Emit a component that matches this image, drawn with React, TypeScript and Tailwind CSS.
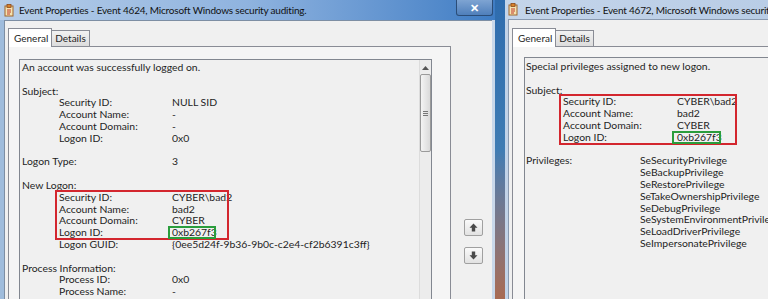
import React from "react";

const FONT = { fontFamily: 'Lato, "Open Sans", sans-serif' };

type Row = { label?: string; value?: string; indent?: boolean; blank?: boolean };

function TitleIcon() {
  return (
    <svg width="11" height="13" viewBox="0 0 11 13" className="shrink-0">
      <rect x="1" y="2" width="8" height="10" fill="#f4e3b0" stroke="#a0642a" strokeWidth="1" />
      <rect x="3" y="0.5" width="4" height="3" fill="#d9822b" stroke="#8a4a1a" strokeWidth="0.8" />
      <path d="M3 6h4M3 8h4M3 10h3" stroke="#c0392b" strokeWidth="1" />
    </svg>
  );
}

function Tabs() {
  return (
    <div className="flex items-end h-[19px]">
      <div className="h-[19px] pl-[5px] pr-[3px] pt-[1px] border border-b-0 border-[#898c95] bg-white text-[10px] text-[#1e1e1e] leading-[16px] relative z-10 -mb-px whitespace-nowrap">
        General
      </div>
      <div className="h-[16px] px-[3px] border border-l-0 border-b-0 border-[#898c95] bg-gradient-to-b from-[#f2f2f2] to-[#dcdcdc] text-[10px] text-[#1e1e1e] leading-[15px] whitespace-nowrap">
        Details
      </div>
    </div>
  );
}

function Lines({
  rows,
  labelW,
  topW,
  red,
  green,
}: {
  rows: Row[];
  labelW: number;
  topW: number;
  red: { start: number; count: number; w: number };
  green: { left: number; w: number };
}) {
  const renderRow = (r: Row, i: number) => {
    if (r.blank) return <div key={i} className="h-[11.8px]" />;
    if (!r.indent && !r.value)
      return (
        <div key={i} className="h-[11.8px] whitespace-nowrap">
          {r.label}
        </div>
      );
    return (
      <div key={i} className={`h-[11.8px] flex whitespace-nowrap ${r.indent ? "pl-[37px]" : ""}`}>
        <div className="shrink-0" style={{ width: r.indent ? labelW : topW }}>
          {r.label}
        </div>
        <div>{r.value}</div>
      </div>
    );
  };
  const before = rows.slice(0, red.start);
  const inside = rows.slice(red.start, red.start + red.count);
  const after = rows.slice(red.start + red.count);
  return (
    <div className="text-[10.4px] leading-[11.8px] text-[#1e1e1e]">
      {before.map(renderRow)}
      <div className="relative">
        <div
          className="absolute -top-[2px] -bottom-[1px] left-[33px] border-2 border-[#d3262e] pointer-events-none"
          style={{ width: red.w }}
        />
        <div
          className="absolute bottom-0 h-[13px] border-2 border-[#2a9d3c] pointer-events-none"
          style={{ left: 37 + labelW + green.left, width: green.w }}
        />
        {inside.map(renderRow)}
      </div>
      {after.map(renderRow)}
    </div>
  );
}

const LEFT_ROWS: Row[] = [
  { label: "An account was successfully logged on." },
  { blank: true },
  { label: "Subject:" },
  { label: "Security ID:", value: "NULL SID", indent: true },
  { label: "Account Name:", value: "-", indent: true },
  { label: "Account Domain:", value: "-", indent: true },
  { label: "Logon ID:", value: "0x0", indent: true },
  { blank: true },
  { label: "Logon Type:", value: "3" },
  { blank: true },
  { label: "New Logon:" },
  { label: "Security ID:", value: "CYBER\\bad2", indent: true },
  { label: "Account Name:", value: "bad2", indent: true },
  { label: "Account Domain:", value: "CYBER", indent: true },
  { label: "Logon ID:", value: "0xb267f3", indent: true },
  { label: "Logon GUID:", value: "{0ee5d24f-9b36-9b0c-c2e4-cf2b6391c3ff}", indent: true },
  { blank: true },
  { label: "Process Information:" },
  { label: "Process ID:", value: "0x0", indent: true },
  { label: "Process Name:", value: "-", indent: true },
];

const RIGHT_ROWS: Row[] = [
  { label: "Special privileges assigned to new logon." },
  { blank: true },
  { label: "Subject:" },
  { label: "Security ID:", value: "CYBER\\bad2", indent: true },
  { label: "Account Name:", value: "bad2", indent: true },
  { label: "Account Domain:", value: "CYBER", indent: true },
  { label: "Logon ID:", value: "0xb267f3", indent: true },
  { blank: true },
  { label: "Privileges:", value: "SeSecurityPrivilege" },
  { label: "", value: "SeBackupPrivilege" },
  { label: "", value: "SeRestorePrivilege" },
  { label: "", value: "SeTakeOwnershipPrivilege" },
  { label: "", value: "SeDebugPrivilege" },
  { label: "", value: "SeSystemEnvironmentPrivilege" },
  { label: "", value: "SeLoadDriverPrivilege" },
  { label: "", value: "SeImpersonatePrivilege" },
];

function ArrowButton({ down }: { down?: boolean }) {
  return (
    <div className="w-[19px] h-[17px] border border-[#a0a0a0] rounded-[2px] bg-gradient-to-b from-[#fafafa] to-[#e2e2e2] flex items-center justify-center">
      <svg width="9" height="9" viewBox="0 0 9 9" className={down ? "rotate-180" : ""}>
        <path d="M4.5 0.5 L8.5 4.8 H6.2 V8.5 H2.8 V4.8 H0.5 Z" fill="#4a4a4a" />
      </svg>
    </div>
  );
}

function Scrollbar() {
  return (
    <div className="w-[12px] shrink-0 border-l border-[#dcdcdc] bg-[#ececec] flex flex-col items-center">
      <svg width="7" height="4" viewBox="0 0 7 4" className="mt-[6px]">
        <path d="M3.5 0 L7 4 H0 Z" fill="#555" />
      </svg>
      <div className="mt-[4px] w-[11px] h-[78px] rounded-[2px] border border-[#9a9a9a] bg-gradient-to-r from-[#f4f4f4] to-[#dadada] flex flex-col items-center justify-center gap-[1px]">
        <div className="w-[5px] h-px bg-[#777]" />
        <div className="w-[5px] h-px bg-[#777]" />
        <div className="w-[5px] h-px bg-[#777]" />
      </div>
    </div>
  );
}

export default function App() {
  return (
    <div className="w-[768px] h-[299px] overflow-hidden flex bg-[#2c5f95]" style={FONT}>
      {/* Left window */}
      <div className="w-[495px] shrink-0 flex flex-col">
        <div className="h-[20px] flex items-center bg-gradient-to-r from-[#b6cde8] via-[#8fb3df] to-[#3f7dc4] relative">
          <div className="pl-[4px] pr-[4px]">
            <TitleIcon />
          </div>
          <div className="text-[10px] tracking-[-0.2px] text-[#111] whitespace-nowrap leading-none">
            Event Properties - Event 4624, Microsoft Windows security auditing.
          </div>
          <div className="absolute right-[2px] top-0 w-[37px] h-[16px] rounded-b-[3px] border border-t-0 border-[#2b4d78] bg-gradient-to-b from-[#7ea4d2] to-[#4f7fbb] flex items-center justify-center">
            <span className="text-white text-[11px] font-bold leading-none">✕</span>
          </div>
        </div>
        <div className="flex-1 flex border-l-4 border-[#9fbcdc]">
          <div className="flex-1 bg-[#f0f0f0] border-l border-t border-[#7d8ea3] pt-[6px] pl-[3px] flex">
            <div className="w-[443px] shrink-0 flex flex-col">
              <Tabs />
              <div className="flex-1 border border-b-0 border-[#898c95] bg-[#f5f5f5] pt-[12px] pl-[10px] pr-[18px]">
                <div className="h-full border border-b-0 border-[#828790] flex bg-[#f0f0f0]">
                  <div className="flex-1 pl-[2px] pt-[2px]">
                    <Lines
                      rows={LEFT_ROWS}
                      labelW={113}
                      topW={150}
                      red={{ start: 11, count: 4, w: 174 }}
                      green={{ left: -4, w: 48 }}
                    />
                  </div>
                  <Scrollbar />
                </div>
              </div>
            </div>
            <div className="flex-1 flex flex-col pl-[13px] pt-[192px] gap-[11px]">
              <ArrowButton />
              <ArrowButton down />
            </div>
          </div>
          <div className="w-[3px] bg-[#c9d8ea]" />
        </div>
      </div>

      {/* Desktop gap */}
      <div className="w-[10px] shrink-0 bg-gradient-to-b from-[#2e6cae] via-[#3f7cb3] to-[#a86a52]" />

      {/* Right window */}
      <div className="flex-1 flex flex-col min-w-0">
        <div className="h-[19px] flex items-center bg-gradient-to-r from-[#c4d5ea] to-[#b9cde6] overflow-hidden">
          <div className="pl-[3px] pr-[6px]">
            <TitleIcon />
          </div>
          <div className="text-[10px] tracking-[-0.2px] text-[#111] whitespace-nowrap leading-none">
            Event Properties - Event 4672, Microsoft Windows security
          </div>
        </div>
        <div className="flex-1 flex border-l-[3px] border-[#c2d3e8] min-w-0">
          <div className="flex-1 bg-[#f0f0f0] border-l border-t border-[#8a9ab0] pt-[7px] pl-[3px] flex min-w-0">
            <div className="flex-1 flex flex-col min-w-0">
              <Tabs />
              <div className="flex-1 border border-r-0 border-b-0 border-[#898c95] bg-[#f5f5f5] pt-[10px] pl-[11px]">
                <div className="h-full border border-r-0 border-b-0 border-[#828790] bg-[#f0f0f0] pl-[1px] pt-[3px] overflow-hidden">
                  <Lines
                    rows={RIGHT_ROWS}
                    labelW={114}
                    topW={114}
                    red={{ start: 3, count: 4, w: 178 }}
                    green={{ left: -5, w: 49 }}
                  />
                </div>
              </div>
            </div>
          </div>
        </div>
      </div>
    </div>
  );
}
